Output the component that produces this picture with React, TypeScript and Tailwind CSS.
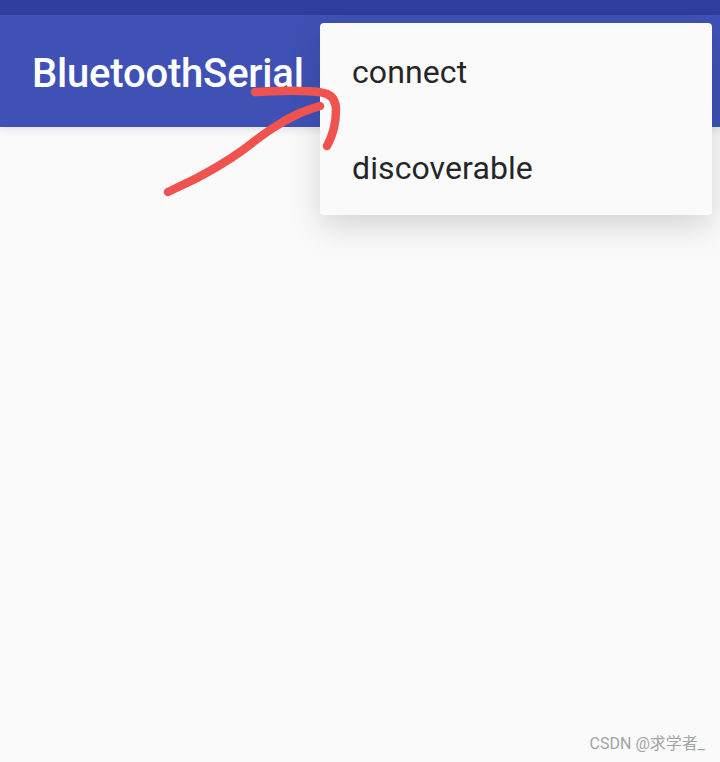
import React from 'react';

const menuItems = ['connect', 'discoverable'];

const App: React.FC = () => {
  return (
    <div className="relative h-[762px] w-[720px] overflow-hidden bg-[#fafafa] font-['Roboto',sans-serif]">
      {/* status bar + toolbar */}
      <div className="h-[15px] bg-[#303f9f]" />
      <div className="flex h-[112px] items-center bg-[#3f51b5] pl-8 pt-[5px] shadow-[0_3px_8px_rgba(0,0,0,0.1)]">
        <span className="text-[40px] font-medium leading-none tracking-[-0.2px] text-white">BluetoothSerial</span>
      </div>

      {/* overflow menu */}
      <div className="absolute left-[320px] top-[23px] w-[392px] rounded bg-[#fafafa] shadow-[0_12px_32px_rgba(0,0,0,0.15)]">
        {menuItems.map(item => (
          <div key={item} className="flex h-24 items-center px-8 pt-[2px] text-[32px] leading-none tracking-[0.1px] text-[#262626]">
            {item}
          </div>
        ))}
      </div>

      {/* hand drawn arrow */}
      <svg className="absolute left-0 top-0" width="720" height="762" fill="none">
        <path
          d="M168 192 C178 187 187 183 197 178 C212 170 226 162 240 152 C251 144 262 135 273 128 C282 122 291 117 300 113 C307 110 314 108 320 106"
          stroke="#ef5350"
          strokeWidth="8.5"
          strokeLinecap="round"
        />
        <path
          d="M255 92 C270 92 285 90 300 91 C310 91 320 91 327 94 C334 97 336 103 336 110 C336 123 333 135 327 146"
          stroke="#ef5350"
          strokeWidth="8.5"
          strokeLinecap="round"
        />
      </svg>

      {/* watermark */}
      <div className="absolute right-[15px] top-[735px] font-['Roboto','Noto_Sans_CJK_SC',sans-serif] text-[16px] leading-[18px] text-[#a3a3a3]">
        CSDN @求学者_
      </div>
    </div>
  );
};

export default App;
